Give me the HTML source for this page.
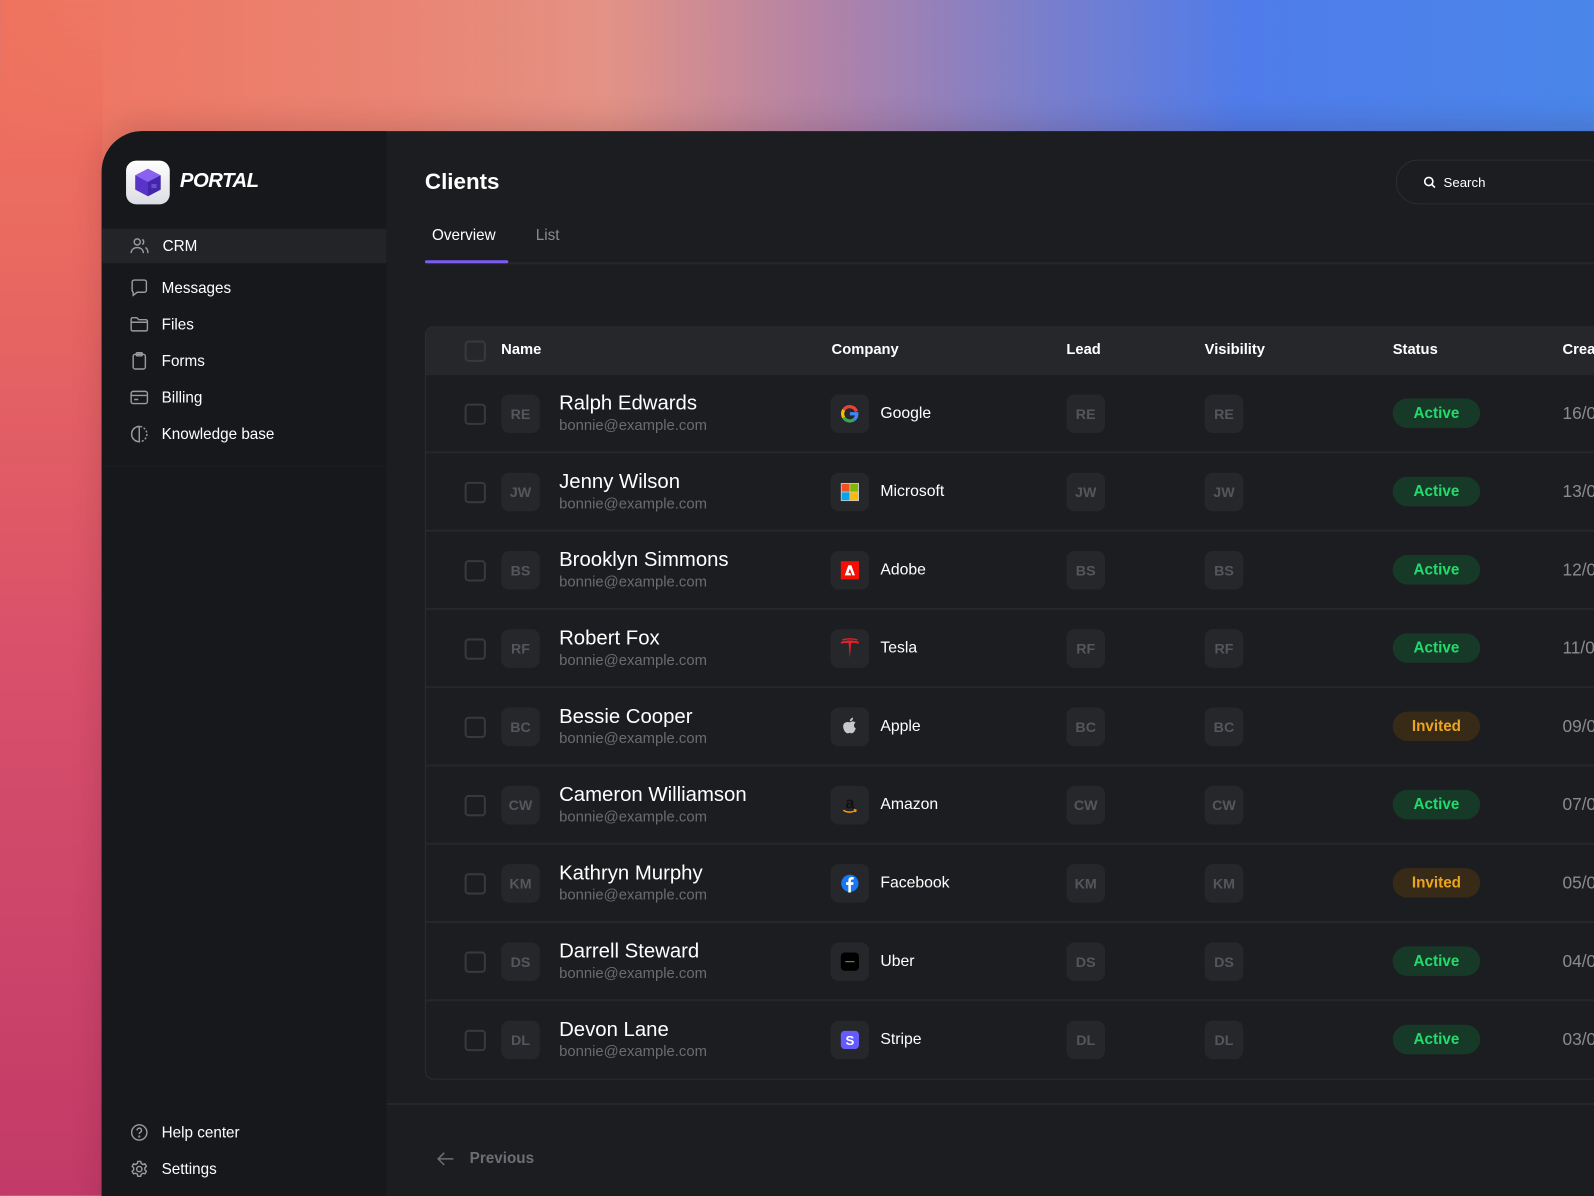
<!DOCTYPE html>
<html><head><meta charset="utf-8"><style>
*{margin:0;padding:0;box-sizing:border-box}
html,body{width:1594px;height:1196px;overflow:hidden}
body{font-family:"Liberation Sans",sans-serif;background:linear-gradient(90deg,#ef735f 0%,#ea8473 25%,#e39285 38%,#b083a8 52%,#7f7fc8 64%,#4f7cea 78%,#4a86ea 100%);position:relative}
#wrap{position:absolute;left:0;top:0;width:1568px;height:1176px;transform:scale(1.01658);transform-origin:0 0}
.leftg{position:absolute;left:0;top:0;width:101px;height:1176px;background:linear-gradient(180deg,#ef735f 0%,#ea6a60 20%,#d8506a 55%,#c23a68 100%);-webkit-mask-image:linear-gradient(180deg,transparent 0,#000 160px);mask-image:linear-gradient(180deg,transparent 0,#000 160px)}
.panel{position:absolute;left:100px;top:129px;width:1500px;height:1100px;background:#1c1d20;border-radius:40px 0 0 0;overflow:hidden;box-shadow:0 -6px 30px rgba(60,20,40,.18)}
.side{position:absolute;left:0;top:0;width:280px;height:100%;background:#17181b}
.logo{position:absolute;left:24px;top:29px;width:43px;height:43px;border-radius:10px;background:linear-gradient(180deg,#fff,#dcdce4)}
.brand{position:absolute;left:77px;top:38px;font-size:20px;font-weight:bold;font-style:italic;color:#fff;letter-spacing:-.5px}
.nav{position:absolute;left:0;width:280px;height:34px;display:flex;align-items:center;color:#fff;font-size:15px}
.nav svg{position:absolute;left:27px}
.nav span{position:absolute;left:59px}
.crm{background:#232428}
.sep{position:absolute;left:0;top:329px;width:280px;height:1px;background:#1f2023}
.title{position:absolute;left:318px;top:37px;font-size:22px;font-weight:bold;color:#fff}
.search{position:absolute;left:1273px;top:28px;width:260px;height:44px;border:1px solid #2c2d31;border-radius:22px}
.search span{position:absolute;left:46px;top:14px;color:#fff;font-size:13px}
.search svg{position:absolute;left:26px;top:15px}
.tabline{position:absolute;left:318px;top:129px;width:1200px;height:2px;background:#26272b}
.tab1{position:absolute;left:325px;top:94px;color:#fff;font-size:15px;font-weight:500}
.tab2{position:absolute;left:427px;top:94px;color:#8a8b90;font-size:15px}
.ul{position:absolute;left:318px;top:127px;width:82px;height:3px;border-radius:2px;background:#7d5cf2}
.table{position:absolute;left:318px;top:192px;width:1300px;height:741px;border:1px solid #2c2d31;border-radius:8px;overflow:hidden}
.th{position:absolute;left:0;top:0;width:100%;height:47px;background:#26272b}
.th span{position:absolute;top:14px;color:#fff;font-size:14.5px;font-weight:bold}
.cb{position:absolute;width:21px;height:21px;border:2px solid #38393e;border-radius:4px}
.row{position:absolute;left:0;width:100%;height:77px;border-top:2px solid #26272b}
.av{position:absolute;width:38px;height:38px;border-radius:8px;background:#26272b;color:#55565b;font-size:14px;font-weight:bold;text-align:center;line-height:38px;top:19px}
.nm{position:absolute;left:131px;top:17px;color:#fff;font-size:20px}
.em{position:absolute;left:131px;top:42px;color:#6b6c71;font-size:14.6px}
.lg{position:absolute;left:398px;top:19px;width:38px;height:38px;border-radius:8px;background:#26272b;display:flex;align-items:center;justify-content:center}
.cn{position:absolute;left:447px;top:29px;color:#fff;font-size:15.5px}
.pill{position:absolute;left:951px;top:23px;width:86px;height:29px;border-radius:15px;text-align:center;line-height:29px;font-size:15px;font-weight:bold}
.act{background:#173a28;color:#23db6d}
.inv{background:#372b18;color:#eba41f}
.dt{position:absolute;left:1118px;top:28px;color:#8a8b90;font-size:17px}
.foot{position:absolute;left:280px;top:956px;width:1300px;height:2px;background:#26272b}
.prev{position:absolute;left:362px;top:1002px;color:#6d6e73;font-size:15px;font-weight:bold}
</style></head><body><div id="wrap">
<div class="leftg"></div>
<div class="panel">
<div class="side">
<div class="logo"><svg width="43" height="43" viewBox="0 0 43 43"><path d="M21.5 8 L34 14.5 L34 28.5 L21.5 35 L9 28.5 L9 14.5Z" fill="#5a34c8"/><path d="M21.5 8 L34 14.5 L21.5 21 L9 14.5Z" fill="#8a62f2"/><path d="M21.5 21 L34 14.5 L34 28.5 L21.5 35Z" fill="#4426a8"/><rect x="25" y="23" width="5" height="4" fill="#6a4cd0"/></svg></div>
<div class="brand">PORTAL</div>
<div class="nav crm" style="top:96px"><svg width="20" height="20" viewBox="0 0 20 20" fill="none" stroke="#9a9ba0" stroke-width="1.4"><circle cx="8" cy="6" r="3"/><path d="M2 17c0-3.5 2.7-5.5 6-5.5s6 2 6 5.5"/><path d="M13 3.5a3 3 0 0 1 0 5M16 11.5c1.5.8 2.5 2.6 2.5 5.5"/></svg><span style="left:60px">CRM</span></div>
<div class="nav" style="top:137px"><svg width="20" height="20" viewBox="0 0 20 20" fill="none" stroke="#9a9ba0" stroke-width="1.4"><path d="M3 4.5A2 2 0 0 1 5 2.5h10a2 2 0 0 1 2 2v8a2 2 0 0 1-2 2H8l-4 3v-3.2A2 2 0 0 1 3 12.5z"/></svg><span>Messages</span></div>
<div class="nav" style="top:173px"><svg width="20" height="20" viewBox="0 0 20 20" fill="none" stroke="#9a9ba0" stroke-width="1.4"><path d="M2 5a1.5 1.5 0 0 1 1.5-1.5h4l2 2h7A1.5 1.5 0 0 1 18 7v8a1.5 1.5 0 0 1-1.5 1.5h-13A1.5 1.5 0 0 1 2 15z"/><path d="M2 8h16"/></svg><span>Files</span></div>
<div class="nav" style="top:209px"><svg width="20" height="20" viewBox="0 0 20 20" fill="none" stroke="#9a9ba0" stroke-width="1.4"><rect x="4" y="3.5" width="12" height="14.5" rx="2"/><rect x="7" y="2" width="6" height="3" rx="1"/></svg><span>Forms</span></div>
<div class="nav" style="top:245px"><svg width="20" height="20" viewBox="0 0 20 20" fill="none" stroke="#9a9ba0" stroke-width="1.4"><rect x="2" y="4" width="16" height="12" rx="2"/><path d="M2 8h16M5 12h4"/></svg><span>Billing</span></div>
<div class="nav" style="top:281px"><svg width="20" height="20" viewBox="0 0 20 20" fill="none" stroke="#9a9ba0" stroke-width="1.4"><circle cx="10" cy="10" r="7.5" stroke-dasharray="2 1.6"/><path d="M10 2.5a7.5 7.5 0 0 0 0 15z"/></svg><span>Knowledge base</span></div>
<div class="sep"></div>
<div class="nav" style="top:968px"><svg width="20" height="20" viewBox="0 0 20 20" fill="none" stroke="#9a9ba0" stroke-width="1.4"><circle cx="10" cy="10" r="7.5"/><path d="M7.8 8a2.2 2.2 0 1 1 3 2c-.6.3-.8.8-.8 1.5"/><circle cx="10" cy="14" r=".4"/></svg><span>Help center</span></div>
<div class="nav" style="top:1004px"><svg width="20" height="20" viewBox="0 0 20 20" fill="none" stroke="#9a9ba0" stroke-width="1.4"><circle cx="10" cy="10" r="2.6"/><path d="M8.6 2.5h2.8l.5 2 1.7 1 2-.6 1.4 2.4-1.5 1.5v2l1.5 1.5-1.4 2.4-2-.6-1.7 1-.5 2H8.6l-.5-2-1.7-1-2 .6-1.4-2.4 1.5-1.5v-2L3 7.3l1.4-2.4 2 .6 1.7-1z"/></svg><span>Settings</span></div>
</div>
<div class="title">Clients</div>
<div class="search"><svg width="13" height="13" viewBox="0 0 13 13" fill="none" stroke="#fff" stroke-width="1.6"><circle cx="5.5" cy="5.5" r="4"/><path d="M8.5 8.5l3 3"/></svg><span>Search</span></div>
<div class="tabline"></div><div class="tab1">Overview</div><div class="tab2">List</div><div class="ul"></div>
<div class="table">
<div class="th"><div class="cb" style="left:38px;top:13px"></div><span style="left:74px">Name</span><span style="left:399px">Company</span><span style="left:630px">Lead</span><span style="left:766px">Visibility</span><span style="left:951px">Status</span><span style="left:1118px">Created</span></div>

<div class="row" style="top:45px"><div class="cb" style="left:38px;top:28px"></div><div class="av" style="left:74px">RE</div><div class="nm">Ralph Edwards</div><div class="em">bonnie@example.com</div><div class="lg"><svg width="18" height="18" viewBox="0 0 18 18" fill="none" stroke-width="3.2"><path d="M15.5 6.8A7 7 0 0 0 3 5.2" stroke="#ea4335"/><path d="M3 5.2a7 7 0 0 0 0 7.6" stroke="#fbbc05"/><path d="M3 12.8a7 7 0 0 0 10 2" stroke="#34a853"/><path d="M13 14.8a7 7 0 0 0 2.8-5.8H9" stroke="#4285f4"/></svg></div><div class="cn">Google</div><div class="av" style="left:630px">RE</div><div class="av" style="left:766px">RE</div><div class="pill act">Active</div><div class="dt">16/05</div></div>

<div class="row" style="top:122px"><div class="cb" style="left:38px;top:28px"></div><div class="av" style="left:74px">JW</div><div class="nm">Jenny Wilson</div><div class="em">bonnie@example.com</div><div class="lg"><svg width="18" height="18" viewBox="0 0 18 18"><rect x="0" y="0" width="18" height="18" fill="#c8c8c8"/><rect x="1" y="1" width="7.6" height="7.6" fill="#f25022"/><rect x="9.4" y="1" width="7.6" height="7.6" fill="#7fba00"/><rect x="1" y="9.4" width="7.6" height="7.6" fill="#00a4ef"/><rect x="9.4" y="9.4" width="7.6" height="7.6" fill="#ffb900"/></svg></div><div class="cn">Microsoft</div><div class="av" style="left:630px">JW</div><div class="av" style="left:766px">JW</div><div class="pill act">Active</div><div class="dt">13/05</div></div>

<div class="row" style="top:199px"><div class="cb" style="left:38px;top:28px"></div><div class="av" style="left:74px">BS</div><div class="nm">Brooklyn Simmons</div><div class="em">bonnie@example.com</div><div class="lg"><svg width="18" height="18" viewBox="0 0 18 18"><rect width="18" height="18" fill="#f40f02"/><path d="M4 14L7.5 4h3L14 14h-2.5L9 7.5 7.5 11.5h2l.7 2.5z" fill="#fff"/></svg></div><div class="cn">Adobe</div><div class="av" style="left:630px">BS</div><div class="av" style="left:766px">BS</div><div class="pill act">Active</div><div class="dt">12/05</div></div>

<div class="row" style="top:276px"><div class="cb" style="left:38px;top:28px"></div><div class="av" style="left:74px">RF</div><div class="nm">Robert Fox</div><div class="em">bonnie@example.com</div><div class="lg"><svg width="20" height="22" viewBox="0 0 20 22"><path d="M1 4.5C5 2.5 15 2.5 19 4.5L18.3 6.3C15.5 5.3 12.5 5.2 11.2 5.8L10 20 8.8 5.8C7.5 5.2 4.5 5.3 1.7 6.3z" fill="#e82127"/><path d="M2.5 2.6C7 1 13 1 17.5 2.6" stroke="#e82127" stroke-width="1.3" fill="none"/></svg></div><div class="cn">Tesla</div><div class="av" style="left:630px">RF</div><div class="av" style="left:766px">RF</div><div class="pill act">Active</div><div class="dt">11/05</div></div>

<div class="row" style="top:353px"><div class="cb" style="left:38px;top:28px"></div><div class="av" style="left:74px">BC</div><div class="nm">Bessie Cooper</div><div class="em">bonnie@example.com</div><div class="lg"><svg width="20" height="22" viewBox="0 0 18 20"><path d="M9 6c1.5-1 3.5-1.5 5 .3-1.8 1.2-1.8 4 .3 5-.6 2-2 4.5-3.5 4.5-1 0-1.4-.5-1.8-.5s-1 .5-1.9.5C5 15.8 3 12.5 3 9.5 3 6 6.5 5 9 6z" fill="#c8c8cc"/><path d="M9 5c0-1.8 1.2-3 2.8-3.2C12 3.5 10.8 5 9 5z" fill="#c8c8cc"/></svg></div><div class="cn">Apple</div><div class="av" style="left:630px">BC</div><div class="av" style="left:766px">BC</div><div class="pill inv">Invited</div><div class="dt">09/05</div></div>

<div class="row" style="top:430px"><div class="cb" style="left:38px;top:28px"></div><div class="av" style="left:74px">CW</div><div class="nm">Cameron Williamson</div><div class="em">bonnie@example.com</div><div class="lg"><svg width="20" height="20" viewBox="0 0 20 20"><text x="10" y="13.5" text-anchor="middle" font-family="Liberation Sans" font-weight="bold" font-size="16" fill="#111">a</text><path d="M3.5 15c4 2.5 9 2.5 12.5 0M14 14.2l2 .8-.5 1.8" stroke="#f90" stroke-width="1.4" fill="none"/></svg></div><div class="cn">Amazon</div><div class="av" style="left:630px">CW</div><div class="av" style="left:766px">CW</div><div class="pill act">Active</div><div class="dt">07/05</div></div>

<div class="row" style="top:507px"><div class="cb" style="left:38px;top:28px"></div><div class="av" style="left:74px">KM</div><div class="nm">Kathryn Murphy</div><div class="em">bonnie@example.com</div><div class="lg"><svg width="18" height="18" viewBox="0 0 18 18"><circle cx="9" cy="9" r="8.5" fill="#1877f2"/><path d="M10 18V10.5h2.3l.4-2.6H10V6.4c0-.8.3-1.3 1.4-1.3h1.4V2.8c-.3 0-1.1-.1-2-.1-2 0-3.3 1.2-3.3 3.4v1.8H5.3v2.6h2.2V18z" fill="#fff"/></svg></div><div class="cn">Facebook</div><div class="av" style="left:630px">KM</div><div class="av" style="left:766px">KM</div><div class="pill inv">Invited</div><div class="dt">05/05</div></div>

<div class="row" style="top:584px"><div class="cb" style="left:38px;top:28px"></div><div class="av" style="left:74px">DS</div><div class="nm">Darrell Steward</div><div class="em">bonnie@example.com</div><div class="lg"><svg width="18" height="18" viewBox="0 0 18 18"><rect width="18" height="18" rx="4" fill="#000"/><rect x="4.5" y="8.5" width="9" height="1" fill="#888"/></svg></div><div class="cn">Uber</div><div class="av" style="left:630px">DS</div><div class="av" style="left:766px">DS</div><div class="pill act">Active</div><div class="dt">04/05</div></div>

<div class="row" style="top:661px"><div class="cb" style="left:38px;top:28px"></div><div class="av" style="left:74px">DL</div><div class="nm">Devon Lane</div><div class="em">bonnie@example.com</div><div class="lg"><svg width="18" height="18" viewBox="0 0 18 18"><rect width="18" height="18" rx="4" fill="#635bff"/><text x="9" y="14" text-anchor="middle" font-family="Liberation Sans" font-weight="bold" font-size="13" fill="#fff">S</text></svg></div><div class="cn">Stripe</div><div class="av" style="left:630px">DL</div><div class="av" style="left:766px">DL</div><div class="pill act">Active</div><div class="dt">03/05</div></div>
</div>
<div class="foot"></div>
<svg style="position:absolute;left:329px;top:1003px" width="18" height="16" viewBox="0 0 18 16" fill="none" stroke="#6d6e73" stroke-width="1.5"><path d="M17 8H2M8 2L2 8l6 6"/></svg>
<div class="prev">Previous</div>
</div>
</div></body></html>
